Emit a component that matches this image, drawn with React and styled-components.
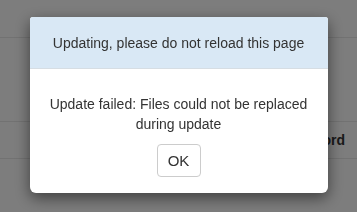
import styled, { createGlobalStyle } from "styled-components";

const GlobalStyle = createGlobalStyle`
  html, body {
    margin: 0;
    padding: 0;
    background: #ffffff;
    font-family: "Liberation Sans", Arial, sans-serif;
    color: #333;
  }
`;

const Page = styled.div`
  width: 357px;
  height: 212px;
  overflow: hidden;
  background: #fafafa;
`;

const TopBar = styled.div`
  height: 37px;
  border-bottom: 1px solid #e4e4e4;
`;

const Section = styled.div`
  height: 83px;
  border-bottom: 1px solid #e4e4e4;
`;

const TableRow = styled.div`
  height: 36px;
  border-bottom: 1px solid #e4e4e4;
  display: flex;
  align-items: center;
  justify-content: flex-end;
  padding-right: 12px;
`;

const HeadCell = styled.span`
  font-size: 14px;
  font-weight: bold;
  color: #333;
`;

const Backdrop = styled.div`
  position: fixed;
  inset: 0;
  background: rgba(0, 0, 0, 0.5);
  display: flex;
  justify-content: center;
  align-items: flex-start;
  padding-top: 17px;
`;

const Modal = styled.div`
  width: 298px;
  background: #fff;
  border-radius: 3px 3px 6px 6px;
  box-shadow: 0 5px 15px rgba(0, 0, 0, 0.5);
  overflow: hidden;
  display: flex;
  flex-direction: column;
`;

const Header = styled.div`
  height: 51px;
  background: #d9e8f5;
  border-bottom: 1px solid #d6dde3;
  display: flex;
  align-items: center;
  justify-content: center;
  font-size: 14px;
  color: #333;
`;

const Body = styled.div`
  padding: 25px 8px 16px;
  display: flex;
  flex-direction: column;
  align-items: center;
  text-align: center;
`;

const Message = styled.p`
  margin: 0 0 10px;
  font-size: 14px;
  line-height: 20px;
  color: #333;
`;

const OkButton = styled.button`
  width: 44px;
  height: 33px;
  background: #fff;
  border: 1px solid #cccccc;
  border-radius: 4px;
  font-family: "Liberation Sans", Arial, sans-serif;
  font-size: 15px;
  color: #333;
  padding: 0;
  cursor: pointer;
`;

const App = () => {
  return (
    <>
      <GlobalStyle />
      <Page>
        <TopBar />
        <Section />
        <TableRow>
          <HeadCell>Password</HeadCell>
        </TableRow>
      </Page>
      <Backdrop>
        <Modal>
          <Header>Updating, please do not reload this page</Header>
          <Body>
            <Message>
              Update failed: Files could not be replaced
              <br />
              during update
            </Message>
            <OkButton>OK</OkButton>
          </Body>
        </Modal>
      </Backdrop>
    </>
  );
};

export default App;
